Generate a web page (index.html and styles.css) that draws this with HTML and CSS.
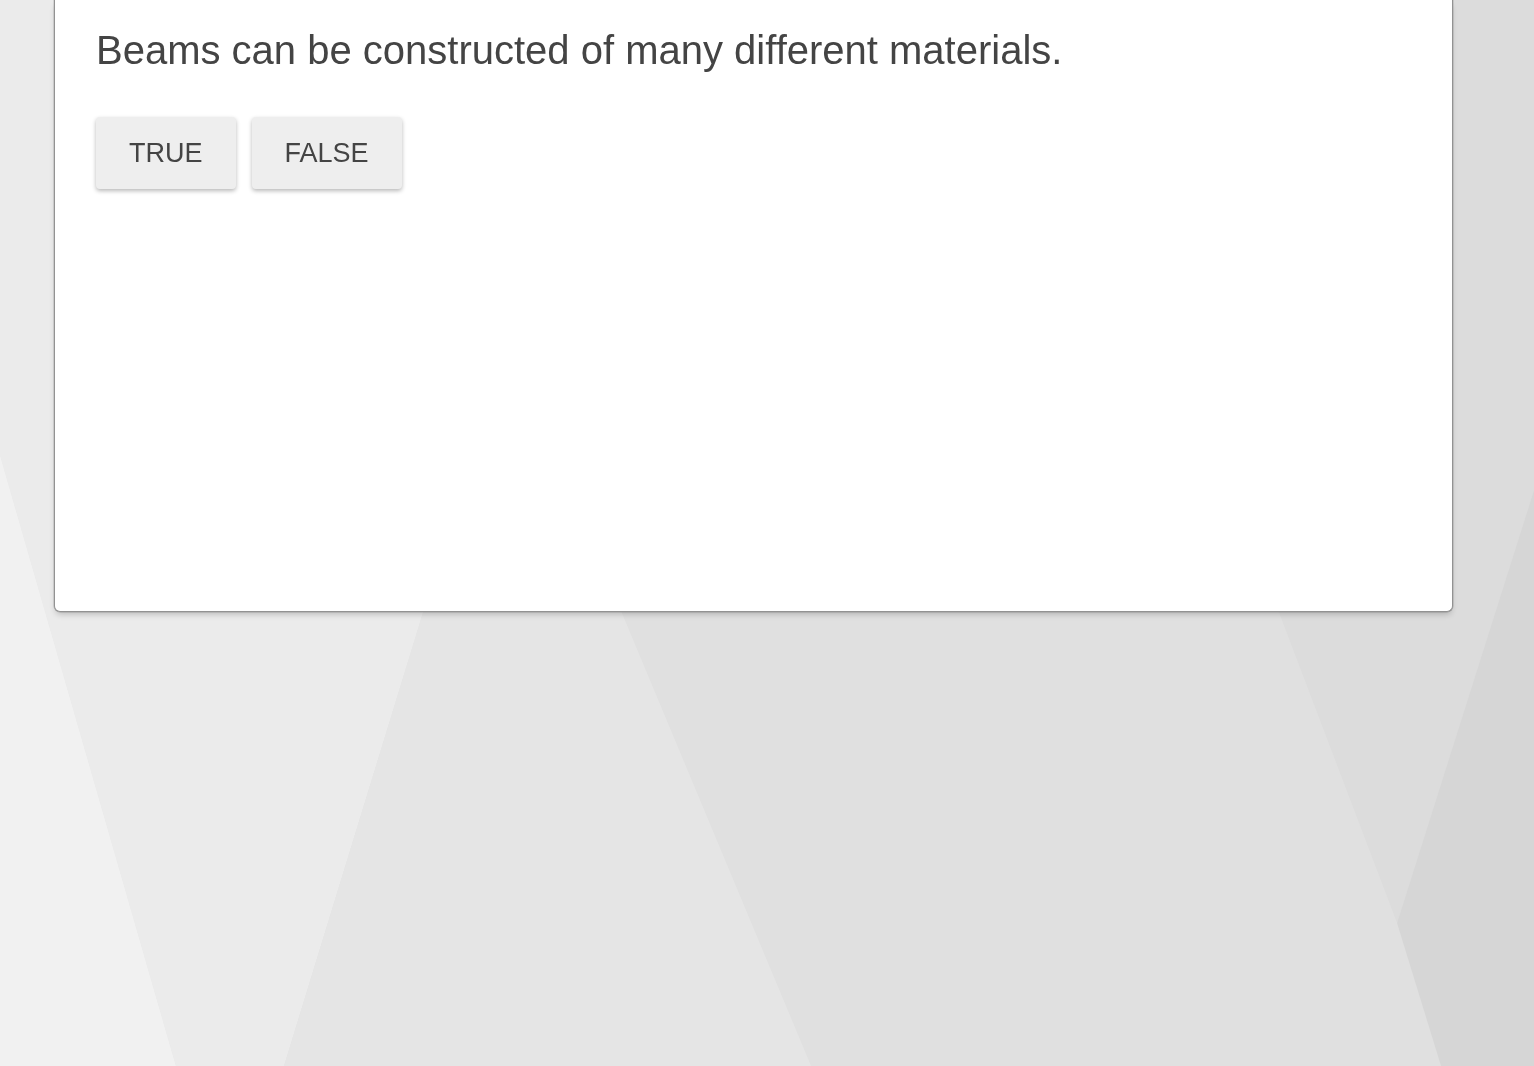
FILE: index.html
```html
<!DOCTYPE html>
<html lang="en">
<head>
<meta charset="utf-8">
<title>Quiz</title>
<link rel="stylesheet" href="styles.css">
</head>
<body>
<svg class="backdrop" width="1534" height="1066" viewBox="0 0 1534 1066" preserveAspectRatio="none" aria-hidden="true">
  <rect x="0" y="0" width="1534" height="1066" fill="#e0e0e0"/>
  <polygon points="0,0 611,0 284,1066 176,1066 0,455" fill="#ebebeb"/>
  <polygon points="0,455 176,1066 0,1066" fill="#f1f1f1"/>
  <polygon points="507,338 811,1066 284,1066" fill="#e5e5e5"/>
  <polygon points="1046,0 1534,0 1534,490 1397,923" fill="#dcdcdc"/>
  <polygon points="1534,490 1534,1066 1441,1066 1397,923" fill="#d6d6d6"/>
</svg>
<main class="card">
  <p class="question">Beams can be constructed of many different materials.</p>
  <div class="answers">
    <button class="answer" type="button">TRUE</button>
    <button class="answer" type="button">FALSE</button>
  </div>
</main>
</body>
</html>
```
FILE: styles.css
```css
html, body {
  margin: 0;
  padding: 0;
  height: 100%;
  overflow: hidden;
}

body {
  font-family: "Liberation Sans", Arial, Helvetica, sans-serif;
  color: #444444;
  background: #e0e0e0;
  position: relative;
}

.backdrop {
  position: fixed;
  left: 0;
  top: 0;
  width: 100%;
  height: 100%;
  z-index: 0;
}

.card {
  position: relative;
  z-index: 1;
  box-sizing: border-box;
  width: 1399px;
  height: 612px;
  margin-left: 54px;
  padding: 27px 41px 0 41px;
  background: #ffffff;
  border: 1px solid #929292;
  border-top: none;
  border-radius: 0 0 6px 6px;
  box-shadow: 0 0 0 0.5px rgba(0, 0, 0, 0.2), 0 4px 6px -2px rgba(0, 0, 0, 0.22);
}

.question {
  margin: 0;
  font-size: 40px;
  line-height: 46px;
  color: #444444;
}

.answers {
  display: flex;
  gap: 16px;
  margin-top: 44px;
}

.answer {
  height: 72px;
  padding: 0 33px;
  border: none;
  border-radius: 4px;
  background: #eeeeee;
  color: #444444;
  font-family: "Liberation Sans", Arial, Helvetica, sans-serif;
  font-size: 27px;
  line-height: 72px;
  box-shadow: 0 2px 4px rgba(0, 0, 0, 0.28);
  cursor: pointer;
}
```
